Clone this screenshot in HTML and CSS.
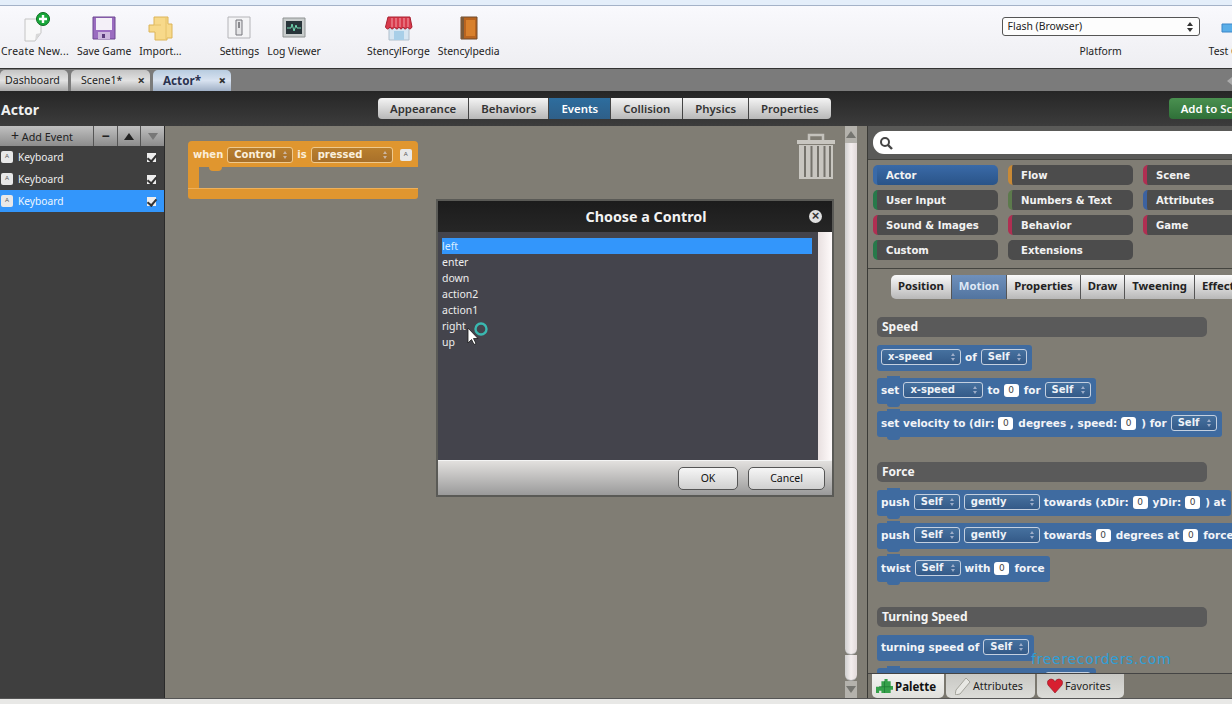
FILE: index.html
```html
<!DOCTYPE html>
<html lang="en">
<head>
    <meta charset="UTF-8">
    <meta name="viewport" content="width=device-width, initial-scale=1.0">
    <title>Stencyl - Actor</title>
    <link rel="stylesheet" href="styles.css">
</head>
<body>
    <div class="titlebar"></div>

    <header class="toolbar">
        <div class="tool tool-first">
            <svg width="34" height="34" viewBox="0 0 34 34"><path d="M7 8h16v14l-6 8H7z" fill="#f8f8f8" stroke="#c4c4c4"/><path d="M17 30l1-7 5-1z" fill="#d8d8d8"/><circle cx="25" cy="8" r="6.5" fill="#18a83a" stroke="#0c6a20"/><path d="M25 4v8M21 8h8" stroke="#fff" stroke-width="2.4"/></svg>
            <span>Create New...</span>
        </div>
        <div class="tool">
            <svg width="34" height="34" viewBox="0 0 34 34"><path d="M6 6h22v22H6z" fill="#9a6cc0" stroke="#6d4690"/><path d="M9 7h16v12H9z" fill="#f4f0f8"/><path d="M11 21h12v7H11z" fill="#cdb8de"/><path d="M15 23h3v4h-3z" fill="#5c3d7c"/></svg>
            <span>Save Game</span>
        </div>
        <div class="tool">
            <svg width="34" height="34" viewBox="0 0 34 34"><path d="M10 6h14v7h4v14h-5v2H11v-8H5v-7h5z" fill="#f7d98a" stroke="#dcb458"/><path d="M22 7v21M10 14h7" stroke="#e6c26a"/></svg>
            <span>Import...</span>
        </div>
        <div class="tool tool-group">
            <svg width="34" height="34" viewBox="0 0 34 34"><path d="M6 6h22v21H6z" fill="#f4f4f6" stroke="#b4b4b8"/><path d="M14 9h6v15h-6z" fill="#e4e4e6" stroke="#77777c"/><path d="M16 11h2v6h-2z" fill="#88888c"/></svg>
            <span>Settings</span>
        </div>
        <div class="tool">
            <svg width="34" height="34" viewBox="0 0 34 34"><path d="M6 7h22v19H6z" fill="#c8cccc" stroke="#8e9292"/><path d="M9 10h16v13H9z" fill="#28343a"/><path d="M10 17h4l1-4 2 7 2-6 1 3h4" fill="none" stroke="#70d8b0"/></svg>
            <span>Log Viewer</span>
        </div>
        <div class="tool tool-forge">
            <svg width="34" height="34" viewBox="0 0 34 34"><path d="M8 16h20v13H8z" fill="#d6e6f2" stroke="#b0bfcc"/><path d="M13 20h10v9H13z" fill="#a8cfe8"/><path d="M7 6h22l2 10q-2 4-4.500 0-2.500 4-4.500 0-2 4-4 0-2 4-4.500 0-2.500 4-4.500 0-2.500 4-4.500 0z" fill="#d83a4c" stroke="#a82030"/><path d="M11 7v9M15 7v9M19 7v9M23 7v9M27 7v9" stroke="#f2a0a8"/></svg>
            <span>StencylForge</span>
        </div>
        <div class="tool">
            <svg width="34" height="34" viewBox="0 0 34 34"><path d="M9 6h16v22H9z" fill="#b8641f" stroke="#6e4a2c"/><path d="M9 6h3v22H9z" fill="#7a5a3a"/><path d="M14 9h9v16h-9z" fill="#d8802c"/></svg>
            <span>Stencylpedia</span>
        </div>

        <div class="tool-platform">
            <div class="select">Flash (Browser)<i class="arrows"></i></div>
            <span>Platform</span>
        </div>
        <div class="tool tool-test">
            <svg width="34" height="34" viewBox="0 0 34 34"><path d="M5 13h24v8H5z" fill="#5aaee8" stroke="#3a86c8"/></svg>
            <span>Test Game</span>
        </div>
    </header>

    <nav class="tabbar">
        <div class="tab tab-dash">Dashboard</div>
        <div class="tab tab-scene">Scene1*<b>×</b></div>
        <div class="tab tab-actor">Actor*<b>×</b></div>
        <i class="tab-more"></i>
    </nav>

    <div class="pagehead">
        <h1>Actor</h1>
        <div class="segments">
            <span>Appearance</span>
            <span>Behaviors</span>
            <span class="on">Events</span>
            <span>Collision</span>
            <span>Physics</span>
            <span>Properties</span>
        </div>
        <div class="add-scene">Add to Scene</div>
    </div>

    <main class="workspace">
        <aside class="sidebar">
            <div class="eventbar">
                <span class="add-event"><b>+</b> Add Event</span>
                <span class="ev-btn minus">−</span>
                <span class="ev-btn"><i class="tri up"></i></span>
                <span class="ev-btn"><i class="tri down"></i></span>
            </div>
            <div class="event"><i class="key"></i>Keyboard<i class="check"></i></div>
            <div class="event"><i class="key"></i>Keyboard<i class="check"></i></div>
            <div class="event selected"><i class="key"></i>Keyboard<i class="check"></i></div>
        </aside>

        <section class="canvas">
            <div class="when-block">
                <div class="when-head">
                    <span>when</span>
                    <span class="drop drop-or w66">Control</span>
                    <span>is</span>
                    <span class="drop drop-or w82">pressed</span>
                    <i class="key key-big"></i>
                </div>
                <div class="when-slot"></div>
                <div class="when-foot"></div>
            </div>

            <svg class="trash" width="40" height="48" viewBox="0 0 40 48"><path d="M13 7V2h14v5" fill="none" stroke="#c4c2bc" stroke-width="2.500"/><path d="M1 7h38v4H1z" fill="#c8c6c0"/><path d="M3 12h34v34H3z" fill="#c8c6c0"/><path d="M9 13v31M15.500 13v31M22 13v31M28.500 13v31M34 13v31" stroke="#75736c" stroke-width="2"/></svg>
        </section>

        <div class="vscroll">
            <div class="sb-arrow"><i class="tri up"></i></div>
            <div class="thumb"></div>
            <div class="thumb thumb-end"></div>
            <div class="sb-arrow"><i class="tri down"></i></div>
        </div>

        <aside class="palette">
            <div class="searchband">
                <div class="search">
                    <svg width="14" height="14" viewBox="0 0 14 14"><circle cx="6" cy="6" r="4" fill="none" stroke="#444" stroke-width="2"/><path d="M9 9l4 4" stroke="#444" stroke-width="2.400"/></svg>
                </div>
            </div>
            <div class="chips">
                <span class="chip active">Actor</span>
                <span class="chip c-orange">Flow</span>
                <span class="chip c-red">Scene</span>
                <span class="chip c-green">User Input</span>
                <span class="chip c-olive">Numbers &amp; Text</span>
                <span class="chip c-blue">Attributes</span>
                <span class="chip c-red">Sound &amp; Images</span>
                <span class="chip c-red">Behavior</span>
                <span class="chip c-red">Game</span>
                <span class="chip c-green">Custom</span>
                <span class="chip">Extensions</span>
            </div>
            <div class="subtabs">
                <span>Position</span>
                <span class="on">Motion</span>
                <span>Properties</span>
                <span>Draw</span>
                <span>Tweening</span>
                <span>Effects</span>
            </div>

            <div class="blocks">
                <h2>Speed</h2>
                <div class="block value"><span class="drop w80">x-speed</span> of <span class="drop w46">Self</span></div>
                <div class="block"><span>set</span><span class="drop w80">x-speed</span> to <i class="num">0</i> for <span class="drop w46">Self</span></div>
                <div class="block">set velocity to (dir: <i class="num">0</i> degrees , speed: <i class="num">0</i> ) for <span class="drop w46">Self</span></div>

                <h2 class="later">Force</h2>
                <div class="block"><span>push</span><span class="drop w46">Self</span><span class="drop w76">gently</span> towards (xDir: <i class="num">0</i> yDir: <i class="num">0</i> ) at</div>
                <div class="block">push <span class="drop w46">Self</span><span class="drop w76">gently</span> towards <i class="num">0</i> degrees at <i class="num">0</i> force</div>
                <div class="block">twist <span class="drop w46">Self</span> with <i class="num">0</i> force</div>

                <h2 class="later">Turning Speed</h2>
                <div class="block value">turning speed of <span class="drop w46">Self</span></div>
                <!-- only the top edge of this block shows above the tabs -->
                <div class="block block-cut"><span class="drop w46"></span></div>
            </div>

            <div class="palette-tabs">
                <span class="on">
                    <svg width="17" height="18" viewBox="0 0 22 18"><path d="M7 3h4V0h4v3h4v6h3v5h-3v4H7v-3H4v3H0v-8h7z" fill="#35a04a"/><path d="M11 3v15M4 10h15" stroke="#1e7a34"/></svg>
                    Palette
                </span>
                <span>
                    <svg width="16" height="18" viewBox="0 0 16 18"><path d="M11 1l4 4-10 12-5 1 1-5z" fill="#e8e8e4" stroke="#a4a49c"/></svg>
                    Attributes
                </span>
                <span>
                    <svg width="16" height="16" viewBox="0 0 16 16"><path d="M8 15L1 7q-2-5 3-6 3 0 4 3 1-3 4-3 5 1 3 6z" fill="#d81f30" stroke="#8e1420" stroke-width=".6"/></svg>
                    Favorites
                </span>
            </div>
        </aside>

        <div class="dialog">
            <div class="dialog-head">
                Choose a Control
                <i class="close">×</i>
            </div>
            <div class="dialog-body">
                <ul class="options">
                    <li class="selected">left</li>
                    <li>enter</li>
                    <li>down</li>
                    <li>action2</li>
                    <li>action1</li>
                    <li>right</li>
                    <li>up</li>
                </ul>
                <div class="dialog-scroll"></div>
            </div>
            <div class="dialog-foot">
                <button class="ok">OK</button>
                <button class="cancel">Cancel</button>
            </div>
        </div>

        <!-- mouse cursor and busy ring from the capture -->
        <svg class="cursor" width="30" height="30" viewBox="0 0 30 30"><circle cx="20" cy="11" r="5.500" fill="none" stroke="#3ab8b0" stroke-width="2.400"/><path d="M7 10v15l3.500-3.500 2.500 5 2-1-2.500-5H17z" fill="#fff" stroke="#1a1a1a" stroke-width=".8"/></svg>
        <div class="watermark">freerecorders.com</div>
    </main>

    <footer class="statusbar"></footer>
</body>
</html>
```

FILE: styles.css
```css
* {
    box-sizing: border-box;
}

html,
body {
    margin: 0;
    padding: 0;
    height: 704px;
    overflow: hidden;
}

body {
    display: flex;
    flex-direction: column;
    font-family: "Noto Sans", Arial, sans-serif;
    font-size: 10.400px;
    color: #222;
    background-color: #807d74;
}

.titlebar {
    height: 6px;
    flex: none;
    background-color: #e4eefa;
    border-bottom: 1px solid #a4b2c8;
}

/* toolbar */
.toolbar {
    height: 63px;
    flex: none;
    display: flex;
    padding-left: 1px;
    background: linear-gradient(#f9f9fd, #eeeef2);
    border-bottom: 1px solid #333;
    overflow: hidden;
}

.tool {
    flex: none;
    display: flex;
    flex-direction: column;
    align-items: center;
    margin-left: 8px;
    padding-top: 5px;
    white-space: nowrap;
}

.tool span {
    line-height: 14px;
    margin-top: -1px;
}

.tool-first {
    width: 68px;
    margin-left: 0;
}

.tool-first span {
    letter-spacing: 0.3px;
}

.tool-group {
    margin-left: 38px;
}

.tool-forge {
    margin-left: 46px;
}

.tool-platform {
    flex: none;
    margin-left: 502px;
    width: 198px;
    padding-top: 11px;
    text-align: center;
}

.tool-platform span {
    display: block;
    margin-top: 8px;
    line-height: 14px;
}

.select {
    position: relative;
    height: 19px;
    padding-left: 5px;
    line-height: 17px;
    text-align: left;
    background-color: #fdfdfd;
    border: 1px solid #555;
    border-radius: 3px;
}

.arrows {
    position: absolute;
    right: 6px;
    top: 4px;
    width: 0;
    height: 0;
    border-left: 3px solid transparent;
    border-right: 3px solid transparent;
    border-bottom: 4px solid #333;
}

.arrows::after {
    content: "";
    position: absolute;
    left: -3px;
    top: 6px;
    border-left: 3px solid transparent;
    border-right: 3px solid transparent;
    border-top: 4px solid #333;
}

.tool-test {
    margin-left: 9px;
}

/* tabs */
.tabbar {
    position: relative;
    height: 22px;
    flex: none;
    display: flex;
    align-items: flex-end;
    gap: 3px;
    background-color: #7b7b7b;
    font-size: 10.600px;
}

.tab {
    position: relative;
    height: 21px;
    padding: 2px 0 0 5px;
    line-height: 16px;
    background: linear-gradient(#c4c4c4, #e2e2e2 50%, #a8a8a8);
    border-radius: 5px 5px 0 0;
}

.tab b {
    position: absolute;
    right: 5px;
    top: 2px;
    font-size: 13px;
    color: #333;
}

.tab-dash {
    width: 68px;
}

.tab-scene {
    width: 79px;
    padding-left: 10px;
}

.tab-actor {
    width: 78px;
    padding-left: 10px;
    font-size: 11.700px;
    font-weight: bold;
    color: #2b3350;
    background: linear-gradient(#b8cce0, #d8e2f0 50%, #a0b0c6);
}

.tab-more {
    position: absolute;
    right: 0;
    top: 8px;
    border-top: 4px solid transparent;
    border-bottom: 4px solid transparent;
    border-right: 5px solid #aaa;
}

/* actor header */
.pagehead {
    position: relative;
    height: 35px;
    flex: none;
    display: flex;
    align-items: center;
    padding-left: 1px;
    background: linear-gradient(#262626, #3c3c3c);
}

.pagehead h1 {
    width: 377px;
    flex: none;
    margin: 2px 0 0;
    font-size: 14px;
    color: #f0f0f0;
}

.segments {
    display: flex;
    flex: none;
    height: 21px;
    font-size: 11.400px;
    font-weight: 600;
    color: #333;
    background: linear-gradient(#f4f4f4, #b8b8b8);
    border-radius: 4px;
    overflow: hidden;
}

.segments span {
    padding: 0 12px;
    line-height: 21px;
    border-left: 1px solid #444;
}

.segments span:first-child {
    border-left: 0;
}

.segments .on {
    color: #fff;
    background: linear-gradient(#2d6d9e, #2f5f88);
}

.add-scene {
    width: 90px;
    height: 21px;
    flex: none;
    margin-left: 338px;
    padding-left: 12px;
    line-height: 21px;
    font-size: 11.400px;
    font-weight: 600;
    white-space: nowrap;
    color: #fff;
    background: linear-gradient(#4a9050, #2f7038);
    border-radius: 4px;
}

/* main area */
.workspace {
    position: relative;
    flex: 1;
    min-height: 0;
    display: flex;
}

.sidebar {
    width: 165px;
    flex: none;
    background-color: #3f3f3f;
    border-right: 1px solid #2a2a2a;
}

.eventbar {
    display: flex;
    height: 20px;
    line-height: 20px;
    background: linear-gradient(#c0c0c0, #8c8c8c);
}

.add-event {
    width: 95px;
    padding-left: 11px;
    font-size: 10.800px;
    white-space: nowrap;
}

.add-event b {
    font-size: 14px;
    font-weight: normal;
}

.ev-btn {
    width: 24px;
    display: flex;
    align-items: center;
    justify-content: center;
    border-left: 1px solid #555;
}

.minus {
    font-size: 14px;
    font-weight: bold;
}

.tri {
    display: block;
    width: 0;
    height: 0;
    border-left: 5px solid transparent;
    border-right: 5px solid transparent;
}

.tri.up {
    border-bottom: 7px solid #222;
}

.tri.down {
    border-top: 7px solid #777;
}

.event {
    position: relative;
    height: 22px;
    display: flex;
    align-items: center;
    padding-left: 18px;
    font-size: 10.200px;
    color: #eee;
}

.event.selected {
    color: #eef6ff;
    background-color: #3396fb;
}

.key {
    position: absolute;
    left: 1px;
    top: 5px;
    width: 12px;
    height: 12px;
    background-color: #e8e8e8;
    border-radius: 2px;
}

.key::after {
    content: "A";
    position: absolute;
    left: 0;
    right: 0;
    top: 2px;
    font: 6px/7px "Liberation Sans", sans-serif;
    text-align: center;
    color: #555;
}

.check {
    position: absolute;
    left: 147px;
    top: 7px;
    width: 9px;
    height: 9px;
    background-color: #eee;
}

.check::after {
    content: "";
    position: absolute;
    left: 2px;
    top: 0;
    width: 4px;
    height: 7px;
    border-right: 2px solid #333;
    border-bottom: 2px solid #333;
    transform: rotate(40deg);
}

/* event canvas */
.canvas {
    position: relative;
    width: 679px;
    flex: none;
    padding: 15px 0 0 23px;
    background-color: #807d74;
}

.when-block {
    width: 230px;
    font: bold 10px "DejaVu Sans", sans-serif;
    color: #fbeeda;
}

.when-head {
    height: 26px;
    display: flex;
    align-items: center;
    gap: 4px;
    padding: 1px 0 0 5px;
    background-color: #e0962f;
    border-radius: 4px 4px 0 0;
}

.when-slot {
    position: relative;
    height: 21px;
    background: linear-gradient(#e0962f, #e0962f) left / 11px 100% no-repeat;
}

.when-slot::after {
    content: "";
    position: absolute;
    left: 21px;
    top: 0;
    width: 13px;
    height: 4px;
    background-color: #e0962f;
    border-radius: 0 0 4px 4px;
}

.when-foot {
    height: 11px;
    background-color: #e0962f;
    border-top: 1px solid #eeb05a;
    border-radius: 0 0 3px 3px;
}

.key-big {
    position: relative;
    left: 0;
    top: 0;
    margin-left: 3px;
}

.trash {
    position: absolute;
    right: 8px;
    top: 7px;
}

.vscroll {
    width: 24px;
    flex: none;
    padding-left: 1px;
    padding-right: 10px;
    background-color: #807d74;
    border-right: 1px solid #3a3a36;
}

.sb-arrow {
    height: 17px;
    display: flex;
    align-items: center;
    justify-content: center;
    background-color: #b4b2ac;
}

.sb-arrow .tri.up {
    border-bottom-color: #757570;
}

.sb-arrow .tri.down {
    border-top-color: #757570;
}

.thumb {
    height: 512px;
    background: linear-gradient(90deg, #cfcfcf, #f4eeee 50%, #e2dada);
    border-radius: 0 0 7px 7px;
    border-bottom: 1px solid #aaa;
}

.thumb-end {
    height: 26px;
}

/* palette */
.palette {
    position: relative;
    flex: 1;
    min-width: 0;
    overflow: hidden;
    background-color: #807d74;
}

.searchband {
    height: 34px;
    padding: 5px 0 0 5px;
    background-color: #5a5a58;
    border-bottom: 1px solid #44443f;
}

.search {
    height: 23px;
    margin-right: -20px;
    padding: 5px 0 0 6px;
    background-color: #fff;
    border-radius: 11px;
}

.chips {
    display: grid;
    grid-template-columns: repeat(3, 125px);
    grid-auto-rows: 20px;
    gap: 5px 10px;
    height: 109px;
    padding: 5px 0 0 5px;
    border-bottom: 1px solid #44443f;
}

.chip {
    padding-left: 9px;
    font: bold 10.100px/21px "DejaVu Sans", sans-serif;
    color: #f2f2f2;
    background-color: #4c4c4c;
    border-radius: 5px;
    border-left: 4px solid #4c4c4c;
    white-space: nowrap;
}

.chip.active {
    background: linear-gradient(#3a6aa8, #2a5488);
    border-left-color: #3a6aa8;
}

.c-orange {
    border-left-color: #c98a36;
}

.c-red {
    border-left-color: #b02f52;
}

.c-green {
    border-left-color: #27794a;
}

.c-olive {
    border-left-color: #5c7a4c;
}

.c-blue {
    border-left-color: #3c62a0;
}

.subtabs {
    display: flex;
    width: max-content;
    height: 24px;
    margin: 6px 0 0 23px;
    font: bold 11.300px/22px "Noto Sans", sans-serif;
    color: #222;
    background: linear-gradient(#fafafa, #b8b8b8);
    border-radius: 5px;
    overflow: hidden;
}

.subtabs span {
    padding: 0 7px;
    border-left: 1px solid #555;
}

.subtabs span:first-child {
    border-left: 0;
}

.subtabs .on {
    color: #dfe8f5;
    background: linear-gradient(#6f90bb, #52749f);
}

.blocks {
    height: 374px;
    overflow: hidden;
    padding: 18px 0 0 9px;
    font: bold 10.500px "DejaVu Sans", sans-serif;
    color: #f2f4f8;
}

.blocks h2 {
    width: 330px;
    height: 20px;
    margin: 0 0 8px;
    padding-left: 5px;
    font: bold 12px/19px "Noto Sans", sans-serif;
    color: #f4f4f4;
    background-color: #5a5a5a;
    border-radius: 5px;
}

.blocks h2.later {
    margin-top: 25px;
}

.block {
    position: relative;
    display: flex;
    width: max-content;
    align-items: center;
    gap: 4px;
    height: 26px;
    margin-bottom: 7px;
    padding: 0 5px 2px 4px;
    white-space: nowrap;
    background-color: #3f6ba0;
    border-radius: 3px;
}

.block::before,
.block::after {
    content: "";
    position: absolute;
    left: 10px;
    width: 13px;
    height: 3px;
    background-color: #3f6ba0;
}

.block::before {
    top: -2px;
}

.block::after {
    bottom: -3px;
    border-radius: 0 0 4px 4px;
}

.block.value::before,
.block.value::after {
    display: none;
}

.block-cut {
    width: 219px;
    justify-content: flex-end;
}

.drop {
    position: relative;
    display: inline-block;
    height: 16px;
    padding-left: 6px;
    font-size: 10px;
    line-height: 13px;
    color: #eef2f8;
    border: 1px solid #c4d0e0;
    border-radius: 3px;
    background: linear-gradient(#46719f, #345a88);
}

/* faint up/down arrows of a dropdown */
.drop::before,
.drop::after {
    content: "";
    position: absolute;
    right: 5px;
    border-left: 2.500px solid transparent;
    border-right: 2.500px solid transparent;
    opacity: 0.6;
}

.drop::before {
    top: 3px;
    border-bottom: 3px solid #dde;
}

.drop::after {
    top: 8px;
    border-top: 3px solid #dde;
}

.drop-or {
    color: #fbf0de;
    border-color: #eec98e;
    background: linear-gradient(#b97f2e, #a8702a);
}

.w46 {
    width: 46px;
}

.w66 {
    width: 66px;
}

.w76 {
    width: 76px;
}

.w80 {
    width: 80px;
}

.w82 {
    width: 82px;
}

.num {
    width: 15px;
    height: 13px;
    margin-right: 1px;
    font-style: normal;
    font-weight: normal;
    font-size: 9px;
    line-height: 13px;
    text-align: center;
    color: #444;
    background-color: #fff;
    border-radius: 3px;
}

.palette-tabs {
    position: absolute;
    left: 0;
    right: 0;
    bottom: 0;
    height: 25px;
    display: flex;
    padding-left: 4px;
    gap: 2px;
    background-color: #7a776e;
    border-top: 1px solid #444;
    font-size: 10.700px;
}

.palette-tabs span {
    display: flex;
    align-items: center;
    gap: 2px;
    width: 89px;
    height: 24px;
    padding-left: 9px;
    white-space: nowrap;
    background: linear-gradient(#c8c8c4, #dcdcd8);
    border-radius: 0 0 5px 5px;
}

.palette-tabs span:last-child {
    width: 87px;
    padding-left: 10px;
}

.palette-tabs .on {
    width: 72px;
    padding-left: 4px;
    font-size: 11.500px;
    font-weight: bold;
    color: #111;
    background: linear-gradient(#f2f2f0, #e0e0dc);
}

/* dialog */
.dialog {
    position: absolute;
    left: 436px;
    top: 73px;
    width: 398px;
    height: 298px;
    display: flex;
    flex-direction: column;
    border: 2px solid #5a5a56;
}

.dialog-head {
    position: relative;
    height: 31px;
    flex: none;
    padding-left: 22px;
    font-size: 14.300px;
    font-weight: bold;
    line-height: 31px;
    text-align: center;
    color: #f2f2f2;
    background: linear-gradient(#1c1c1c, #262626);
}

.close {
    position: absolute;
    right: 10px;
    top: 9px;
    width: 13px;
    height: 13px;
    font: bold 13px/12px "Liberation Sans", sans-serif;
    text-align: center;
    color: #333;
    background-color: #e0e0e0;
    border-radius: 50%;
}

.dialog-body {
    flex: 1;
    display: flex;
    min-height: 0;
}

.options {
    flex: 1;
    margin: 0;
    padding: 6px 6px 0 4px;
    list-style: none;
    font-size: 10.500px;
    line-height: 16px;
    color: #eee;
    background-color: #44444c;
}

.options .selected {
    background-color: #3396fb;
    color: #d8ecff;
}

.dialog-scroll {
    width: 14px;
    flex: none;
    background: linear-gradient(90deg, #e8e0e0, #fffbfb);
}

.dialog-foot {
    height: 35px;
    flex: none;
    display: flex;
    justify-content: flex-end;
    align-items: center;
    gap: 10px;
    padding-right: 7px;
    background: linear-gradient(#e2e0de, #9a9a9a);
    border-top: 1px solid #f4f4f4;
}

.dialog-foot button {
    height: 23px;
    padding: 0;
    font: 10.500px "Noto Sans", sans-serif;
    color: #111;
    background: linear-gradient(#f6f6f6, #d0d0d0);
    border: 1px solid #555;
    border-radius: 5px;
}

.ok {
    width: 60px;
}

.cancel {
    width: 77px;
}

.cursor {
    position: absolute;
    left: 461px;
    top: 192px;
}

.watermark {
    position: absolute;
    left: 1031px;
    top: 525px;
    font: 14px "DejaVu Sans", sans-serif;
    letter-spacing: 0.7px;
    color: #2f9fd8;
}

.statusbar {
    height: 6px;
    flex: none;
    background-color: #e8e8e6;
    border-top: 1px solid #555;
}
```
